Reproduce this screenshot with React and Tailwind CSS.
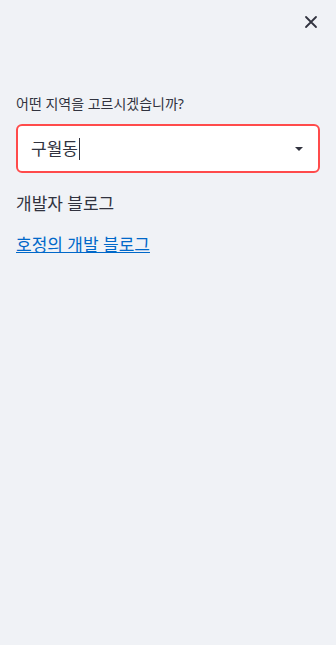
import React from 'react';

export default function App() {
  return (
    <div
      className="w-[336px] h-[645px] bg-[#f0f2f6] text-[#31333f] flex flex-col"
      style={{ fontFamily: '"Noto Sans", "Noto Sans CJK KR", sans-serif' }}
    >
      <div className="flex justify-end pt-[13px] pr-[16px]">
        <button className="w-[18px] h-[18px] flex items-center justify-center">
          <svg width="14" height="14" viewBox="0 0 14 14" fill="none" stroke="#31333f" strokeWidth="1.8" strokeLinecap="round">
            <path d="M2 2L12 12M12 2L2 12" />
          </svg>
        </button>
      </div>

      <div className="px-4 pt-[63px]">
        <label className="block text-[14px] leading-[20px] mb-[10px]">어떤 지역을 고르시겠습니까?</label>
        <div className="h-[49px] bg-white border-2 border-[#ff4b4b] rounded-[6px] flex items-center pl-[13px] pr-[14px]">
          <span className="text-[17px] leading-[24px]">구월동</span>
          <span className="w-px h-[22px] bg-[#31333f] ml-[1px]" />
          <div className="flex-1" />
          <svg width="10" height="6" viewBox="0 0 10 6">
            <path d="M1 1L5 5L9 1Z" fill="#31333f" />
          </svg>
        </div>

        <p className="text-[17px] leading-[24px] mt-[19px]">개발자 블로그</p>
        <a href="#" className="block text-[17px] leading-[24px] mt-[17px] text-[#0068c9] underline">
          호정의 개발 블로그
        </a>
      </div>
    </div>
  );
}
